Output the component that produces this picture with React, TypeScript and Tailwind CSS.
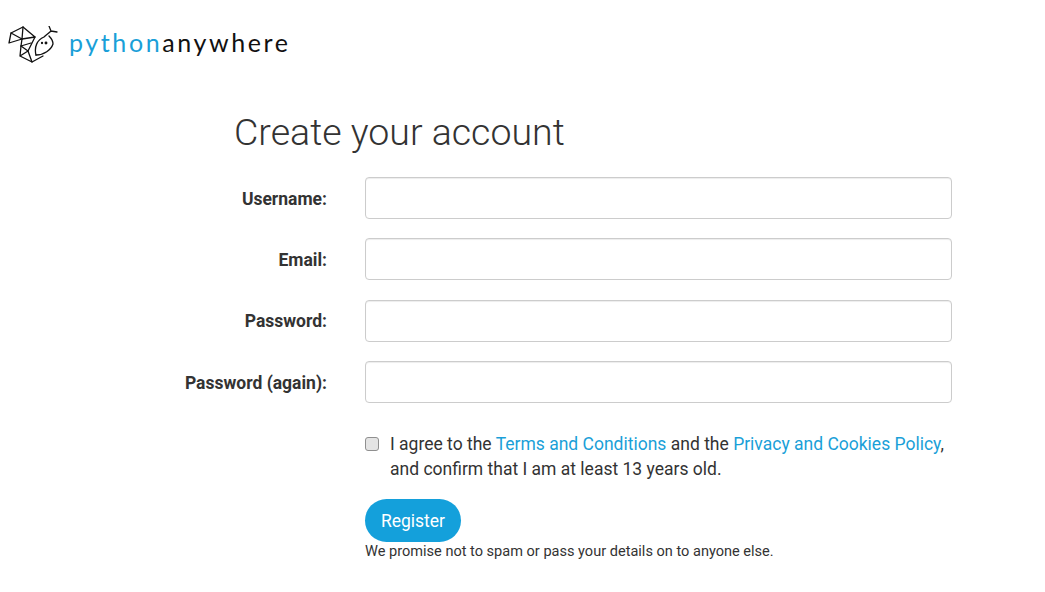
const fields = ['Username:', 'Email:', 'Password:', 'Password (again):']

const Logo = () => (
  <svg width="50" height="38" viewBox="8 27 50 38" fill="none" stroke="#111" strokeWidth="1.3" strokeLinejoin="round" strokeLinecap="round">
    {/* upper triangles */}
    <path d="M23 28 L11 34 L9 44 L22 40 L35 38 Z" />
    <path d="M11 34 L22 40 L23 28" />
    {/* middle */}
    <path d="M22 40 L21 47 L28 52 L35 38" />
    <path d="M21 47 L31 44" />
    {/* lower */}
    <path d="M21 47 L20 57 L32 63 L28 52 L20 57" />
    <path d="M32 63 L43 57" />
    {/* fish */}
    <path d="M36 56 C34 48 37 41 44 38 C46 36 49 34 51 32 L49 27 M51 32 L57 33" />
    <path d="M36 56 C44 56 51 51 53 45 C53 42 51 39 49 37" />
    <circle cx="46" cy="44" r="0.8" fill="#111" />
    <circle cx="42" cy="44" r="0.5" fill="#111" />
  </svg>
)

export default function App() {
  return (
    <div className="min-h-[592px] bg-white font-['Roboto',sans-serif] text-[#333333]">
      <header className="flex items-center pl-[8px] pt-[26px]">
        <Logo />
        <span className="ml-[11px] mt-[-7px] font-['Lato',sans-serif] text-[25px] leading-[34px] font-normal tracking-[2.6px]">
          <span className="text-[#1a9fd8]">python</span>
          <span className="text-[#111111]">anywhere</span>
        </span>
      </header>

      <main className="pl-[234px] pt-[48px]">
        <h1 className="text-[37.5px] leading-[40px] font-light">Create your account</h1>

        <form className="mt-[25px] ml-[-69px] flex w-[787px] flex-col gap-[19.3px]">
          {fields.map((label) => (
            <div key={label} className="flex items-center">
              <label className="mt-[2px] w-[162px] text-right text-[17.5px] font-bold">{label}</label>
              <input
                type="text"
                className="ml-[38px] h-[42px] w-[587px] rounded-[4px] border border-[#cccccc] bg-white shadow-[inset_0_1px_1px_rgba(0,0,0,0.075)]"
              />
            </div>
          ))}
        </form>

        <div className="ml-[131px] w-[587px]">
          <div className="mt-[29px] flex items-start">
            <input
              type="checkbox"
              className="mt-[5px] h-[14px] w-[14px] shrink-0 appearance-none rounded-[3px] border border-[#8f8f8f] bg-[#e4e4e4]"
            />
            <p className="ml-[11px] text-[17.5px] leading-[25px]">
              I agree to the <a className="text-[#1a9fd8]">Terms and Conditions</a> and the{' '}
              <a className="text-[#1a9fd8]">Privacy and Cookies Policy</a>, and confirm that I am at least 13 years old.
            </p>
          </div>

          <button className="mt-[17px] h-[43px] w-[96px] rounded-[22px] bg-[#14a0db] pt-[2px] text-[17.5px] text-white">
            Register
          </button>
          <p className="text-[14.55px] leading-[20px]">We promise not to spam or pass your details on to anyone else.</p>
        </div>
      </main>
    </div>
  )
}
